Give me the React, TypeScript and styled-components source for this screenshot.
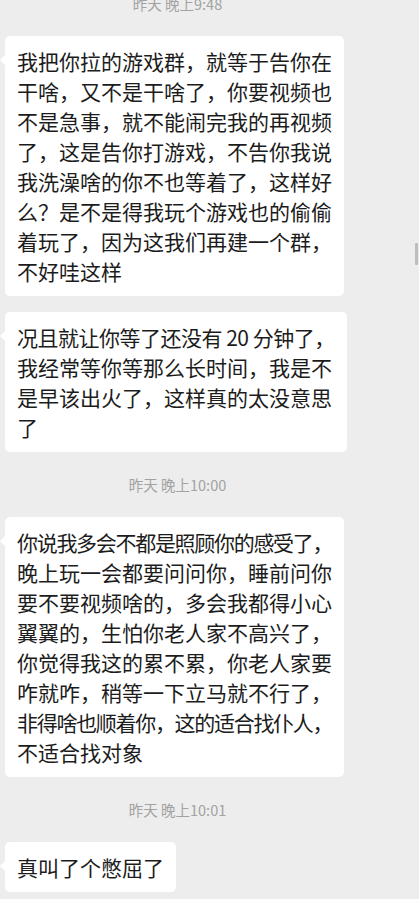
import React from "react";
import styled, { createGlobalStyle } from "styled-components";

const GlobalStyle = createGlobalStyle`
  html, body {
    margin: 0;
    padding: 0;
    background: #ededed;
  }
  body {
    font-family: "Noto Sans CJK SC", "Noto Sans", sans-serif;
    overflow: hidden;
  }
`;

const Screen = styled.div`
  position: relative;
  width: 419px;
  height: 899px;
  overflow: hidden;
  background: #ededed;
`;

const Column = styled.div`
  width: 350px;
  margin-top: -29px;
  padding-left: 5px;
  box-sizing: border-box;
  display: flex;
  flex-direction: column;
  align-items: flex-start;
`;

const Time = styled.div`
  align-self: stretch;
  text-align: center;
  font-size: 14.5px;
  line-height: 20px;
  color: #a2a2a2;
  padding: 23px 0 22px;
  font-family: "Noto Sans CJK SC", Roboto, sans-serif;
`;

const Bubble = styled.div<{ $gap?: number }>`
  position: relative;
  background: #ffffff;
  border-radius: 5px;
  padding: 10px 12px;
  margin-top: ${(p) => p.$gap ?? 0}px;
  color: #1c1c1c;
  font-size: 21px;
  line-height: 30px;

  &::before {
    content: "";
    position: absolute;
    left: -5px;
    top: 19px;
    border-top: 5px solid transparent;
    border-bottom: 5px solid transparent;
    border-right: 5px solid #ffffff;
  }
`;

const Line = styled.span<{ $squeeze?: number }>`
  display: block;
  white-space: nowrap;
  letter-spacing: ${(p) => p.$squeeze ?? 0}px;
`;

const ScrollThumb = styled.div`
  position: absolute;
  right: 1px;
  top: 243px;
  width: 3px;
  height: 22px;
  background: #bdbdbd;
  border-radius: 1px;
`;

type Msg = { lines: { t: string; s?: number }[] };

const b1: Msg = {
  lines: [
    { t: "我把你拉的游戏群，就等于告你在" },
    { t: "干啥，又不是干啥了，你要视频也" },
    { t: "不是急事，就不能闹完我的再视频" },
    { t: "了，这是告你打游戏，不告你我说" },
    { t: "我洗澡啥的你不也等着了，这样好" },
    { t: "么？是不是得我玩个游戏也的偷偷" },
    { t: "着玩了，因为这我们再建一个群，" },
    { t: "不好哇这样" },
  ],
};

const b2: Msg = {
  lines: [
    { t: "况且就让你等了还没有 20 分钟了，", s: -0.5 },
    { t: "我经常等你等那么长时间，我是不" },
    { t: "是早该出火了，这样真的太没意思" },
    { t: "了" },
  ],
};

const b3: Msg = {
  lines: [
    { t: "你说我多会不都是照顾你的感受了，", s: -1.3 },
    { t: "晚上玩一会都要问问你，睡前问你" },
    { t: "要不要视频啥的，多会我都得小心" },
    { t: "翼翼的，生怕你老人家不高兴了，" },
    { t: "你觉得我这的累不累，你老人家要" },
    { t: "咋就咋，稍等一下立马就不行了，" },
    { t: "非得啥也顺着你，这的适合找仆人，", s: -1.3 },
    { t: "不适合找对象" },
  ],
};

const b4: Msg = { lines: [{ t: "真叫了个憋屈了" }] };

const MessageBubble: React.FC<{ msg: Msg; gap?: number }> = ({ msg, gap }) => (
  <Bubble $gap={gap}>
    {msg.lines.map((l, i) => (
      <Line key={i} $squeeze={l.s}>
        {l.t}
      </Line>
    ))}
  </Bubble>
);

export default function App() {
  return (
    <>
      <GlobalStyle />
      <Screen>
        <Column>
          <Time>昨天 晚上9:48</Time>
          <MessageBubble msg={b1} />
          <MessageBubble msg={b2} gap={16} />
          <Time>昨天 晚上10:00</Time>
          <MessageBubble msg={b3} />
          <Time>昨天 晚上10:01</Time>
          <MessageBubble msg={b4} />
        </Column>
        <ScrollThumb />
      </Screen>
    </>
  );
}
